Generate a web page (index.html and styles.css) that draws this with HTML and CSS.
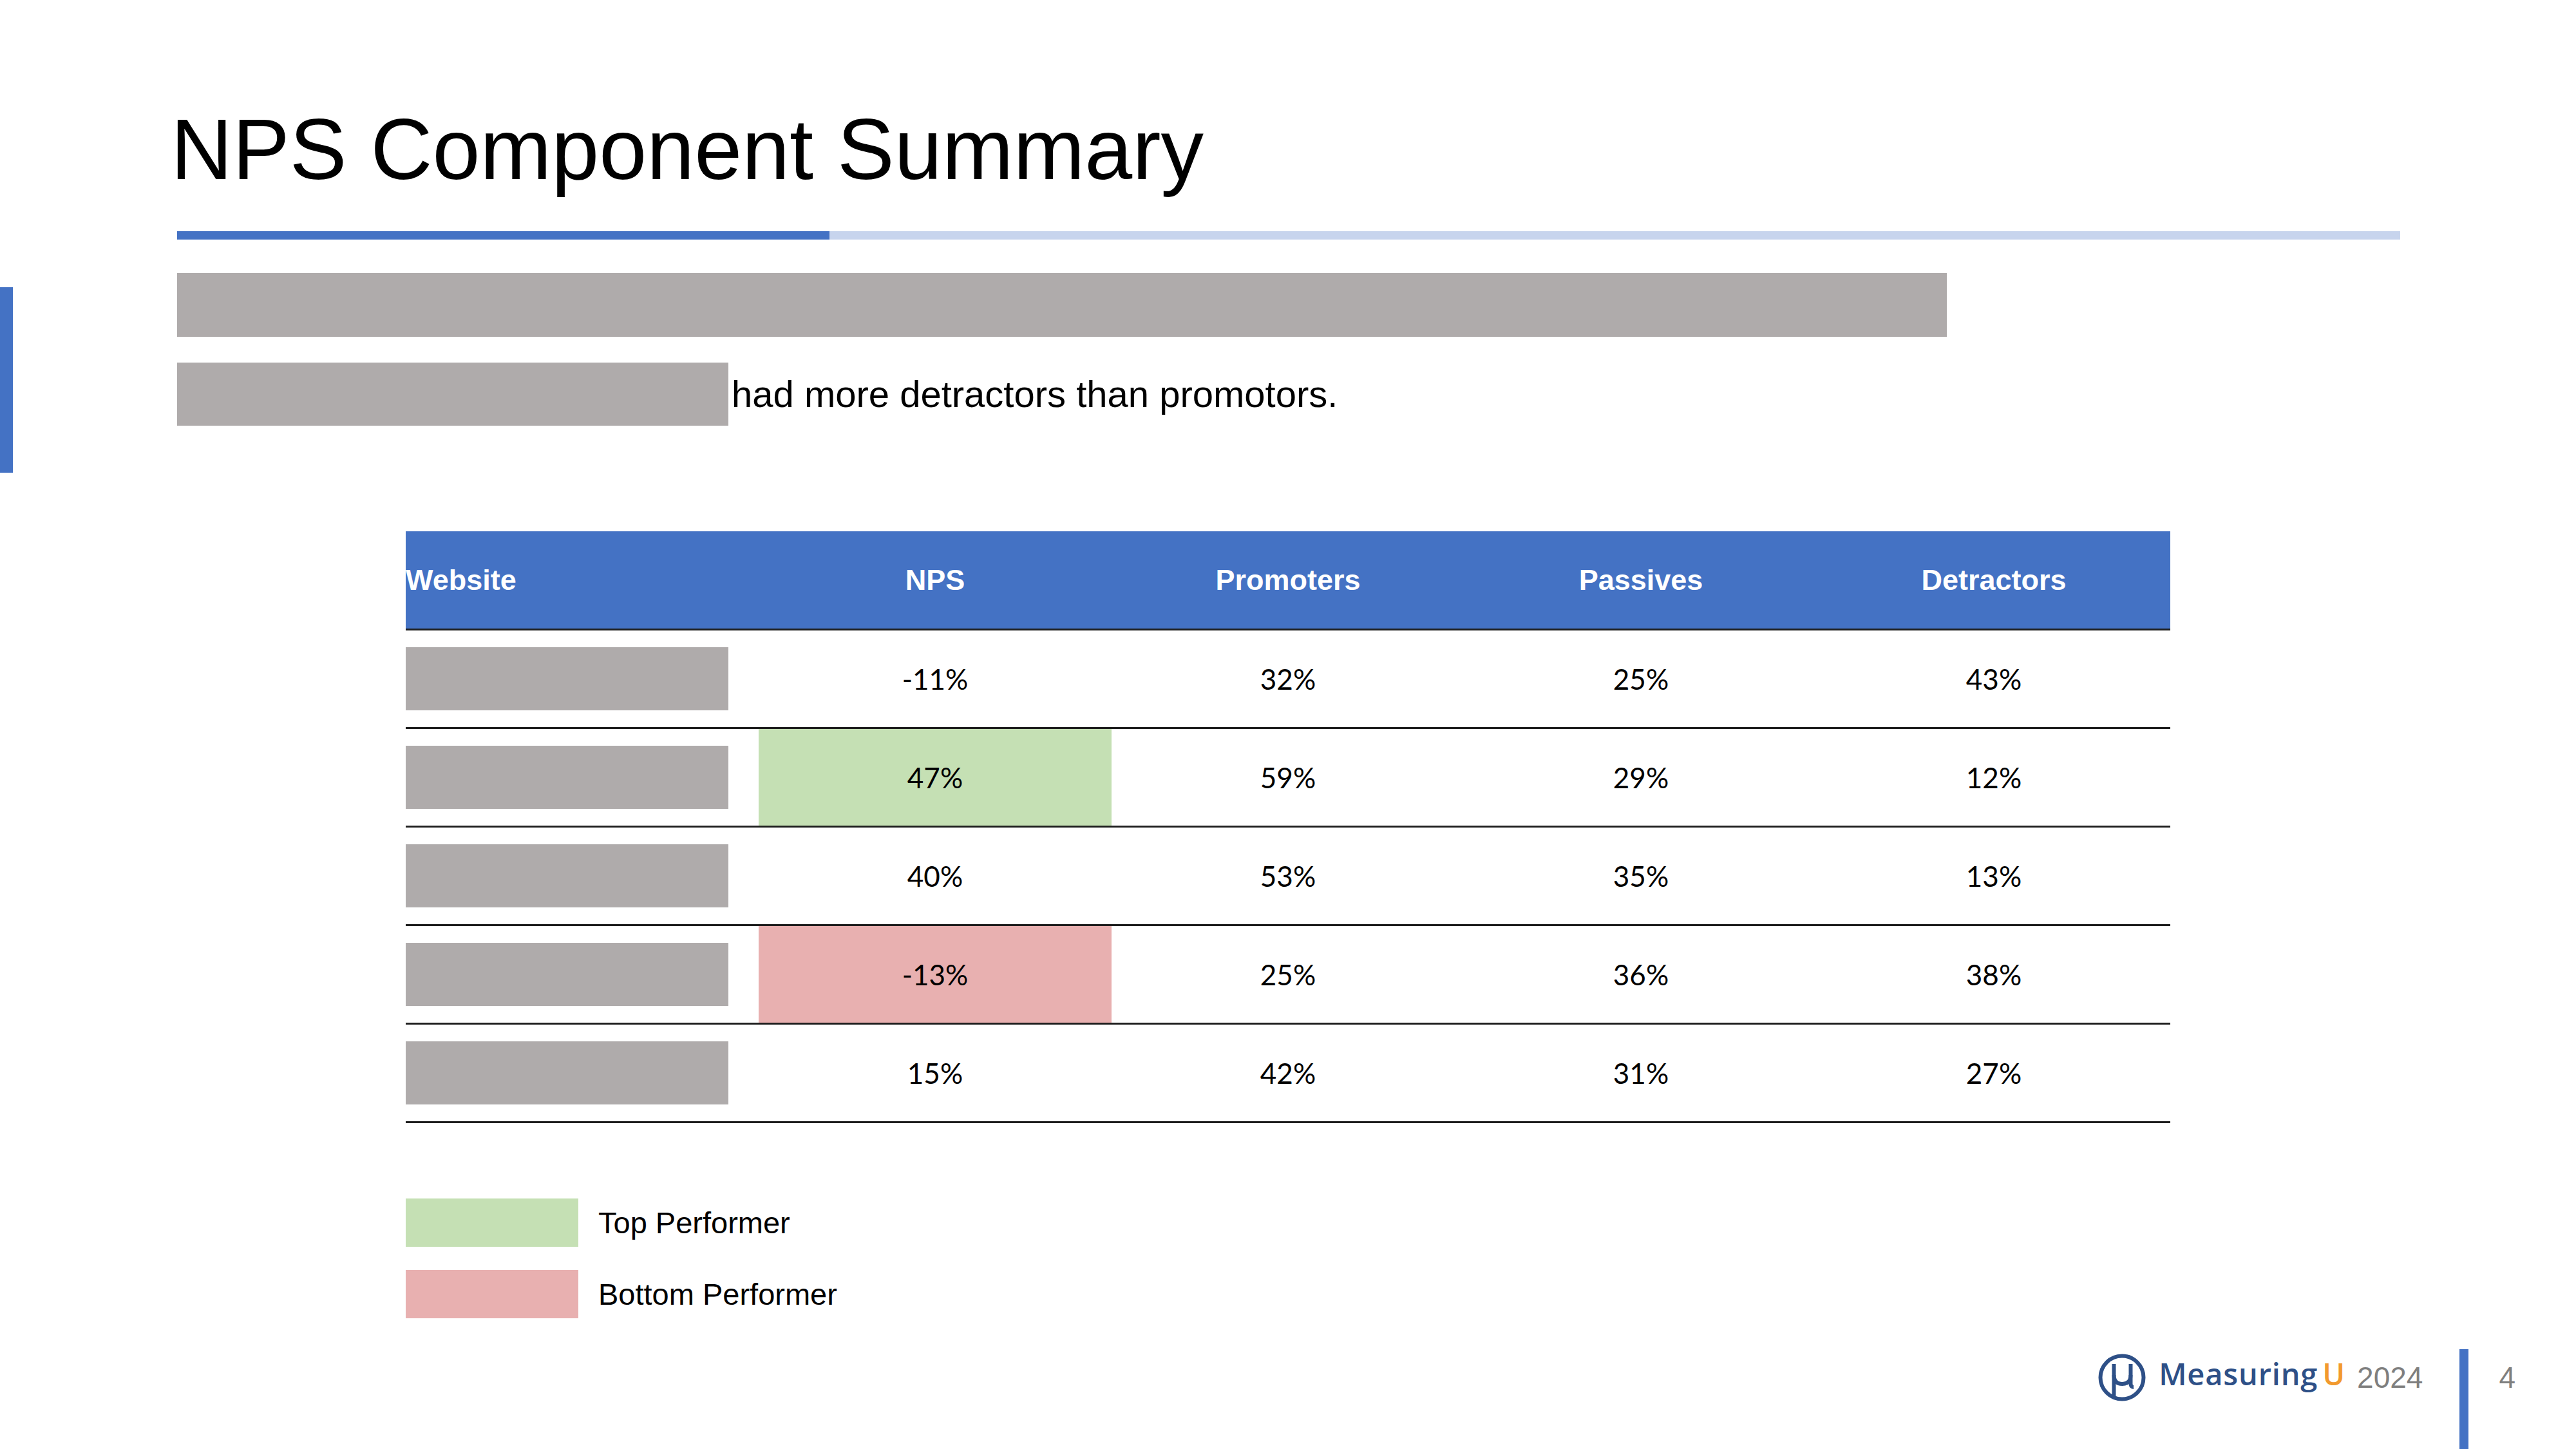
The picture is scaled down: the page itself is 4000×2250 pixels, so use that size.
FILE: index.html
```html
<!DOCTYPE html>
<html lang="en">
<head>
<meta charset="utf-8">
<title>NPS Component Summary</title>
<link rel="stylesheet" href="styles.css">
</head>
<body>
<div class="slide">
  <div class="accent"></div>
  <div class="main">
    <h1 class="title">NPS Component Summary</h1>
    <div class="rule"><div class="rule-dark"></div><div class="rule-light"></div></div>
    <div class="redact redact-wide"></div>
    <div class="summary">
      <div class="redact redact-short"></div>
      <span class="summary-text">had more detractors than promotors.</span>
    </div>
    <div class="table">
      <div class="row row-head">
        <div class="cell cell-name">Website</div>
        <div class="cell">NPS</div>
        <div class="cell">Promoters</div>
        <div class="cell">Passives</div>
        <div class="cell">Detractors</div>
      </div>
      <div class="row row-data">
        <div class="cell cell-name"><div class="redact name-box"></div></div>
        <div class="cell">-11%</div>
        <div class="cell">32%</div>
        <div class="cell">25%</div>
        <div class="cell">43%</div>
      </div>
      <div class="row row-data">
        <div class="cell cell-name"><div class="redact name-box"></div></div>
        <div class="cell top">47%</div>
        <div class="cell">59%</div>
        <div class="cell">29%</div>
        <div class="cell">12%</div>
      </div>
      <div class="row row-data">
        <div class="cell cell-name"><div class="redact name-box"></div></div>
        <div class="cell">40%</div>
        <div class="cell">53%</div>
        <div class="cell">35%</div>
        <div class="cell">13%</div>
      </div>
      <div class="row row-data">
        <div class="cell cell-name"><div class="redact name-box"></div></div>
        <div class="cell bottom">-13%</div>
        <div class="cell">25%</div>
        <div class="cell">36%</div>
        <div class="cell">38%</div>
      </div>
      <div class="row row-data">
        <div class="cell cell-name"><div class="redact name-box"></div></div>
        <div class="cell">15%</div>
        <div class="cell">42%</div>
        <div class="cell">31%</div>
        <div class="cell">27%</div>
      </div>
    </div>
    <div class="legend">
      <div class="legend-item"><div class="swatch top"></div><span>Top Performer</span></div>
      <div class="legend-item"><div class="swatch bottom"></div><span>Bottom Performer</span></div>
    </div>
  </div>
  <footer class="footer">
    <div class="logo">
      <svg class="logo-mark" viewBox="0 0 76 76" width="76" height="76" aria-hidden="true">
        <circle cx="38" cy="37" r="33.5" fill="none" stroke="#2E5087" stroke-width="6"/>
        <path d="M25.5 16 V70" fill="none" stroke="#2E5087" stroke-width="6"/>
        <path d="M25.5 33 C25.5 42 30 47 38.5 47 C47 47 51.5 42 51.5 33" fill="none" stroke="#2E5087" stroke-width="6"/>
        <path d="M51.5 16 V47 C51.5 50 53 52 56 52" fill="none" stroke="#2E5087" stroke-width="6"/>
      </svg>
      <span class="logo-text">Measuring</span>
      <span class="logo-u">U</span>
    </div>
    <span class="year">2024</span>
    <div class="footer-bar"></div>
    <span class="page">4</span>
  </footer>
</div>
</body>
</html>
```

FILE: styles.css
```css
html, body {
  margin: 0;
  padding: 0;
  background: #ffffff;
}

.slide {
  width: 4000px;
  height: 2250px;
  display: grid;
  grid-template-columns: 20px 1fr;
  grid-template-rows: 2095px 155px;
  font-family: "Liberation Sans", Arial, sans-serif;
  color: #000000;
  overflow: hidden;
  background: #ffffff;
}

.accent {
  grid-column: 1;
  grid-row: 1;
  margin-top: 446px;
  height: 288px;
  background: #4472C4;
}

.main {
  grid-column: 2;
  grid-row: 1;
  padding-left: 255px;
  padding-top: 166px;
  display: flex;
  flex-direction: column;
  align-items: flex-start;
}

.title {
  margin: 0 0 0 -10px;
  font-size: 133px;
  line-height: 132px;
  font-weight: 400;
  white-space: nowrap;
}

.rule {
  display: flex;
  margin-top: 61px;
  height: 13px;
}

.rule-dark {
  width: 1013px;
  background: #4472C4;
}

.rule-light {
  width: 2439px;
  background: #C7D4ED;
}

.redact {
  background: #AFABAB;
}

.redact-wide {
  width: 2748px;
  height: 99px;
  margin-top: 52px;
}

.summary {
  display: flex;
  align-items: center;
  margin-top: 40px;
}

.redact-short {
  width: 856px;
  height: 98px;
}

.summary-text {
  font-size: 58px;
  line-height: 58px;
  margin-left: 5px;
  white-space: nowrap;
}

.table {
  margin-top: 164px;
  margin-left: 355px;
  width: 2740px;
}

.row {
  display: grid;
  grid-template-columns: repeat(5, 548px);
  height: 150px;
  border-bottom: 3px solid #1e1e1e;
}

.row-head {
  height: 151px;
  background: #4472C4;
  color: #ffffff;
  font-weight: 700;
  font-size: 45px;
}

.cell {
  display: flex;
  align-items: center;
  justify-content: center;
}

.cell-name {
  justify-content: flex-start;
}

.row-data .cell {
  font-family: Lato, "Open Sans", sans-serif;
  font-size: 44px;
}

.name-box {
  width: 501px;
  height: 98px;
}

.top {
  background: #C5E0B4;
}

.bottom {
  background: #E8B0B0;
}

.legend {
  margin-top: 117px;
  margin-left: 355px;
  display: flex;
  flex-direction: column;
  gap: 36px;
}

.legend-item {
  display: flex;
  align-items: center;
  gap: 31px;
  font-size: 47px;
  line-height: 47px;
}

.swatch {
  width: 268px;
  height: 75px;
}

.footer {
  grid-column: 1 / span 2;
  grid-row: 2;
  display: flex;
  justify-content: flex-end;
  align-items: flex-start;
  padding-right: 94px;
  height: 155px;
}

.logo {
  display: flex;
  align-items: flex-start;
  margin-top: 7px;
}

.logo-mark {
  display: block;
  width: 76px;
  height: 76px;
}

.logo-text,
.logo-u {
  font-family: "Open Sans", "Noto Sans", sans-serif;
  font-weight: 600;
  font-size: 47px;
  line-height: 47px;
  margin-top: 8px;
  white-space: nowrap;
}

.logo-text {
  margin-left: 19px;
  letter-spacing: 0.8px;
  color: #2E5087;
}

.logo-u {
  margin-left: 7px;
  color: #F29A2E;
}

.year {
  margin-left: 19px;
  margin-top: 21px;
  font-size: 46px;
  line-height: 46px;
  color: #7F7F7F;
}

.footer-bar {
  width: 14px;
  height: 155px;
  margin-left: 57px;
  background: #4472C4;
}

.page {
  margin-left: 47px;
  margin-top: 21px;
  font-size: 46px;
  line-height: 46px;
  color: #7F7F7F;
}
```
